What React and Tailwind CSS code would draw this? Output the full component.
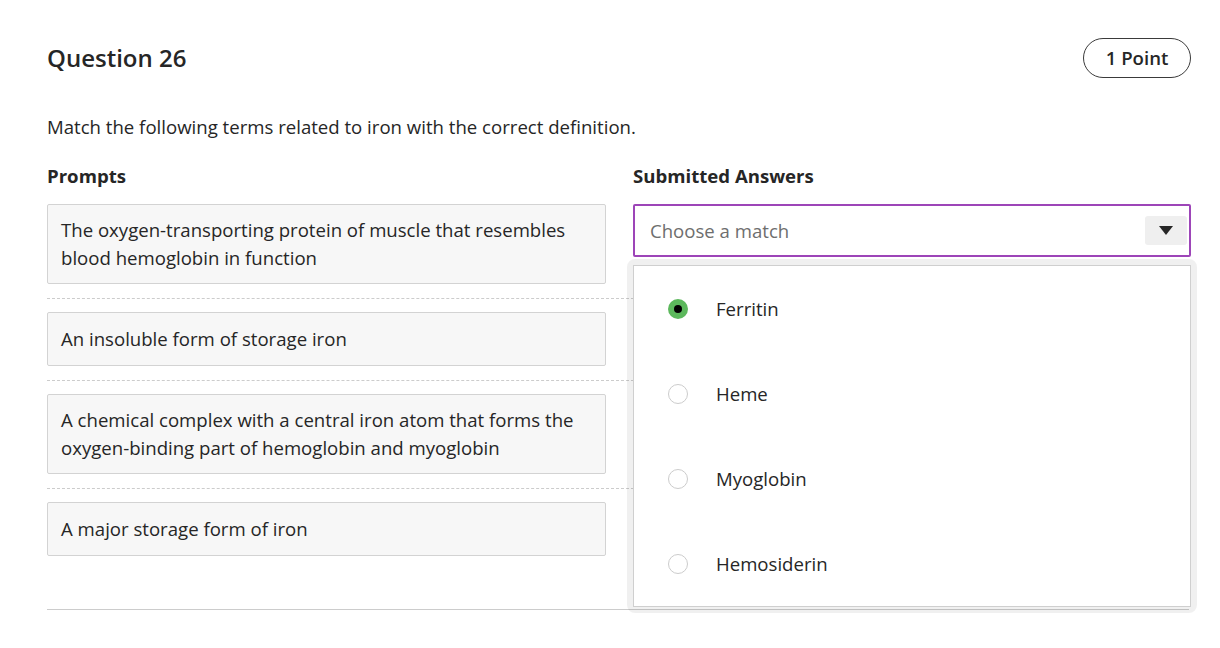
import React from "react";

const prompts = [
  "The oxygen-transporting protein of muscle that resembles blood hemoglobin in function",
  "An insoluble form of storage iron",
  "A chemical complex with a central iron atom that forms the oxygen-binding part of hemoglobin and myoglobin",
  "A major storage form of iron",
];

const options = ["Ferritin", "Heme", "Myoglobin", "Hemosiderin"];

function Caret() {
  return (
    <span className="flex h-[29px] w-[42px] items-center justify-center rounded-[3px] bg-[#efefef]">
      <svg width="14" height="9" viewBox="0 0 14 9">
        <path d="M0 0 L14 0 L7 9 Z" fill="#262626" />
      </svg>
    </span>
  );
}

function Menu() {
  return (
    <div className="absolute left-[-6px] right-[-6px] top-[55px] z-10 rounded-lg border-[6px] border-[#0000000f]">
      <div className="border border-[#cfcfcf] bg-white">
        {options.map((o, i) => (
          <div key={o} className="flex h-[85px] items-center pl-[34px]">
            {i === 0 ? (
              <span className="flex h-[20px] w-[20px] items-center justify-center rounded-full bg-[#5cb85c]">
                <span className="h-[8px] w-[8px] rounded-full bg-black" />
              </span>
            ) : (
              <span className="h-[20px] w-[20px] rounded-full border border-[#cccccc] bg-white" />
            )}
            <span className="ml-[28px] text-[18.6px] leading-[24px] text-[#262626]">{o}</span>
          </div>
        ))}
      </div>
    </div>
  );
}

export default function App() {
  return (
    <div className="min-h-[648px] bg-white px-[47px] pt-[38px] text-[#262626]" style={{ fontFamily: "'Open Sans', 'Liberation Sans', sans-serif" }}>
      <div className="mr-[-18px] flex items-center justify-between">
        <h1 className="text-[24px] font-semibold leading-[32px]">Question 26</h1>
        <div className="flex h-[40px] w-[108px] items-center justify-center rounded-full border border-[#3a3a3a] text-[18.6px] font-semibold">
          1 Point
        </div>
      </div>
      <p className="mt-[37px] text-[18.6px] leading-[24px]">
        Match the following terms related to iron with the correct definition.
      </p>
      <div className="mt-[25px] grid grid-cols-[559px_558px] gap-x-[27px]">
        <div className="text-[18.6px] font-bold leading-[24px]">Prompts</div>
        <div className="text-[18.6px] font-bold leading-[24px]">Submitted Answers</div>
      </div>
      <div className="mt-[16px]">
        {prompts.map((p, i) => (
          <div
            key={i}
            className={
              "grid grid-cols-[559px_558px] items-start gap-x-[27px] " +
              (i < prompts.length - 1 ? "border-b border-dashed border-[#cccccc] pb-[14px] " : "pb-[14px] ") +
              (i > 0 ? "pt-[13px]" : "")
            }
          >
            <div className="flex min-h-[54px] items-center rounded-[2px] border border-[#d3d3d3] bg-[#f7f7f7] px-[13px] py-[11px] text-[18.6px] leading-[28px]">
              {p}
            </div>
            <div className="relative">
              {i === 0 ? (
                <>
                  <div className="flex h-[53px] items-center justify-between rounded-[2px] border-2 border-[#9d45b8] bg-white pl-[15px] pr-[2px]">
                    <span className="text-[18.6px] text-[#6e6e6e]">Choose a match</span>
                    <Caret />
                  </div>
                  <Menu />
                </>
              ) : (
                <div className="flex h-[53px] items-center justify-between rounded-[2px] border border-[#c8c8c8] bg-white pl-[15px] pr-[3px]">
                  <span className="text-[18.6px] text-[#6e6e6e]">Choose a match</span>
                  <Caret />
                </div>
              )}
            </div>
          </div>
        ))}
      </div>
      <div className="mt-[39px] mr-[-16px] border-t border-[#cccccc]" />
    </div>
  );
}
